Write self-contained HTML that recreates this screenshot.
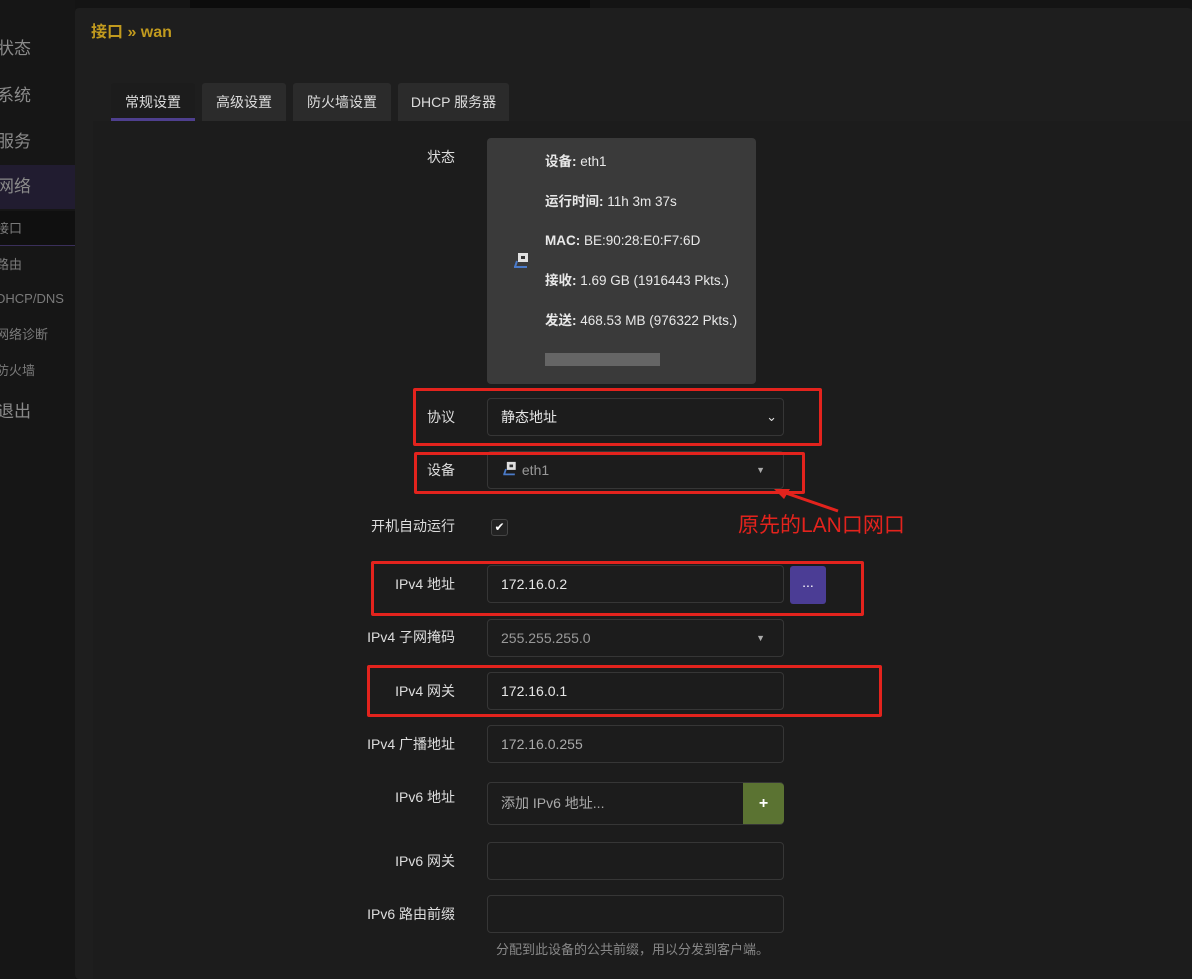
<!DOCTYPE html>
<html><head><meta charset="utf-8"><style>
*{margin:0;padding:0;box-sizing:border-box}
body{width:1192px;height:979px;background:#141414;font-family:"Liberation Sans","Noto Sans CJK SC",sans-serif;color:#ddd;position:relative;overflow:hidden;font-size:14px}
.a{position:absolute}
.side{left:0;top:0;width:75px;height:979px;background:#161616}
.sm{position:absolute;left:-3px;font-size:17px;color:#8a8a8a;line-height:22px}
.ss{position:absolute;left:-4px;font-size:13px;color:#7a7a7a;line-height:18px}
.card{left:75px;top:8px;width:1117px;height:971px;background:#1e1e1e;border-radius:4px}
.tab{position:absolute;top:75px;height:38px;background:#2b2b2b;color:#ddd;font-size:14px;line-height:38px;text-align:center;border-radius:3px 3px 0 0}
.lbl{position:absolute;right:737px;font-size:14px;color:#ddd;text-align:right;white-space:nowrap;line-height:18px}
.inp{position:absolute;left:487px;width:297px;height:38px;border:1px solid #363636;border-radius:4px;background:#1c1c1c;font-size:14px;line-height:36px;padding-left:13px;color:#e6e6e6}
.red{position:absolute;border:3px solid #e3231d;border-radius:2px}
.tri{position:absolute;right:18px;top:0;font-size:9px;color:#aaa}
.st{position:absolute;left:58px;height:20px;line-height:20px;white-space:nowrap}
</style></head><body>
<div class="a" style="left:190px;top:0;width:400px;height:8px;background:#0c0c0c"></div>
<div class="a side">
<div class="sm" style="top:38px">状态</div>
<div class="sm" style="top:85px">系统</div>
<div class="sm" style="top:131px">服务</div>
<div class="a" style="left:0;top:165px;width:75px;height:44px;background:#211c30"></div>
<div class="sm" style="top:176px">网络</div>
<div class="a" style="left:0;top:211px;width:75px;height:35px;background:#101010;border-bottom:1px solid #3a2f5a"></div>
<div class="ss" style="top:220px">接口</div>
<div class="ss" style="top:256px">路由</div>
<div class="ss" style="top:290px">DHCP/DNS</div>
<div class="ss" style="top:326px">网络诊断</div>
<div class="ss" style="top:362px">防火墙</div>
<div class="sm" style="top:401px">退出</div>
</div>
<div class="a card">
<div class="a" style="left:16px;top:14px;font-size:16px;font-weight:bold;color:#c19a1e;line-height:22px">接口 » wan</div>
<div class="a" style="left:18px;top:113px;width:1099px;height:858px;background:#1c1c1c"></div>
<div class="tab" style="left:36px;width:84px;background:#1c1c1c;border-bottom:3px solid #4e3f8e">常规设置</div>
<div class="tab" style="left:127px;width:84px">高级设置</div>
<div class="tab" style="left:218px;width:98px">防火墙设置</div>
<div class="tab" style="left:323px;width:111px">DHCP 服务器</div>
</div>
<div class="lbl" style="top:148px">状态</div>
<div class="a" style="left:487px;top:138px;width:269px;height:246px;background:#3a3a3a;border-radius:4px;font-size:13.5px;color:#e8e8e8">
<svg class="a" style="left:25px;top:114px" width="18" height="18" viewBox="0 0 18 18"><rect x="6" y="1" width="10" height="9" fill="#e0e0e0"/><rect x="9" y="4" width="4" height="3" fill="#333"/><path d="M2 15h13" stroke="#4a7ac8" stroke-width="2"/><path d="M5 9l-2 6" stroke="#4a7ac8" stroke-width="2"/></svg>
<div class="st" style="top:14px"><b>设备:</b> eth1</div>
<div class="st" style="top:54px"><b>运行时间:</b> 11h 3m 37s</div>
<div class="st" style="top:93px"><b>MAC:</b> BE:90:28:E0:F7:6D</div>
<div class="st" style="top:133px"><b>接收:</b> 1.69 GB (1916443 Pkts.)</div>
<div class="st" style="top:173px"><b>发送:</b> 468.53 MB (976322 Pkts.)</div>
<div class="a" style="left:58px;top:215px;width:115px;height:13px;background:#777;opacity:.7"></div>
</div>
<div class="lbl" style="top:408px">协议</div>
<div class="inp" style="top:398px">静态地址<span class="tri" style="font-size:13px;color:#ddd;right:6px">⌄</span></div>
<div class="red" style="left:413px;top:388px;width:409px;height:58px"></div>
<div class="lbl" style="top:461px">设备</div>
<div class="inp" style="top:451px;color:#999"><svg style="vertical-align:-2px" width="17" height="16" viewBox="0 0 18 18"><rect x="6" y="1" width="10" height="9" fill="#e0e0e0"/><rect x="9" y="4" width="4" height="3" fill="#333"/><path d="M2 15h13M5 9l-2 6" stroke="#4a7ac8" stroke-width="2"/></svg> eth1<span class="tri">▼</span></div>
<div class="red" style="left:414px;top:452px;width:391px;height:42px"></div>
<svg class="a" style="left:770px;top:485px" width="70" height="30"><path d="M68 26L10 6" stroke="#e3231d" stroke-width="3"/><path d="M4 4l16 0-6 10z" fill="#e3231d"/></svg>
<div class="a" style="left:738px;top:512px;font-size:21px;color:#e3231d;line-height:28px">原先的LAN口网口</div>
<div class="lbl" style="top:517px">开机自动运行</div>
<div class="a" style="left:491px;top:519px;width:17px;height:17px;background:#222;border:1px solid #444;border-radius:3px;color:#fff;font-size:12px;text-align:center;line-height:15px">✔</div>
<div class="lbl" style="top:575px">IPv4 地址</div>
<div class="inp" style="top:565px">172.16.0.2</div>
<div class="a" style="left:790px;top:566px;width:36px;height:38px;background:#4b3d95;border-radius:3px;color:#fff;text-align:center;line-height:32px">...</div>
<div class="red" style="left:371px;top:561px;width:493px;height:55px"></div>
<div class="lbl" style="top:628px">IPv4 子网掩码</div>
<div class="inp" style="top:619px;color:#999">255.255.255.0<span class="tri">▼</span></div>
<div class="lbl" style="top:682px">IPv4 网关</div>
<div class="inp" style="top:672px">172.16.0.1</div>
<div class="red" style="left:367px;top:665px;width:515px;height:52px"></div>
<div class="lbl" style="top:735px">IPv4 广播地址</div>
<div class="inp" style="top:725px;color:#aaa">172.16.0.255</div>
<div class="lbl" style="top:788px">IPv6 地址</div>
<div class="inp" style="top:782px;height:43px;line-height:41px;color:#aaa">添加 IPv6 地址...</div>
<div class="a" style="left:743px;top:783px;width:41px;height:41px;background:#5b7332;border-radius:0 4px 4px 0;color:#fff;text-align:center;line-height:41px;font-size:16px;font-weight:bold">+</div>
<div class="lbl" style="top:852px">IPv6 网关</div>
<div class="inp" style="top:842px"></div>
<div class="lbl" style="top:905px">IPv6 路由前缀</div>
<div class="inp" style="top:895px"></div>
<div class="a" style="left:496px;top:941px;font-size:13px;color:#888;line-height:18px">分配到此设备的公共前缀，用以分发到客户端。</div>
</body></html>
